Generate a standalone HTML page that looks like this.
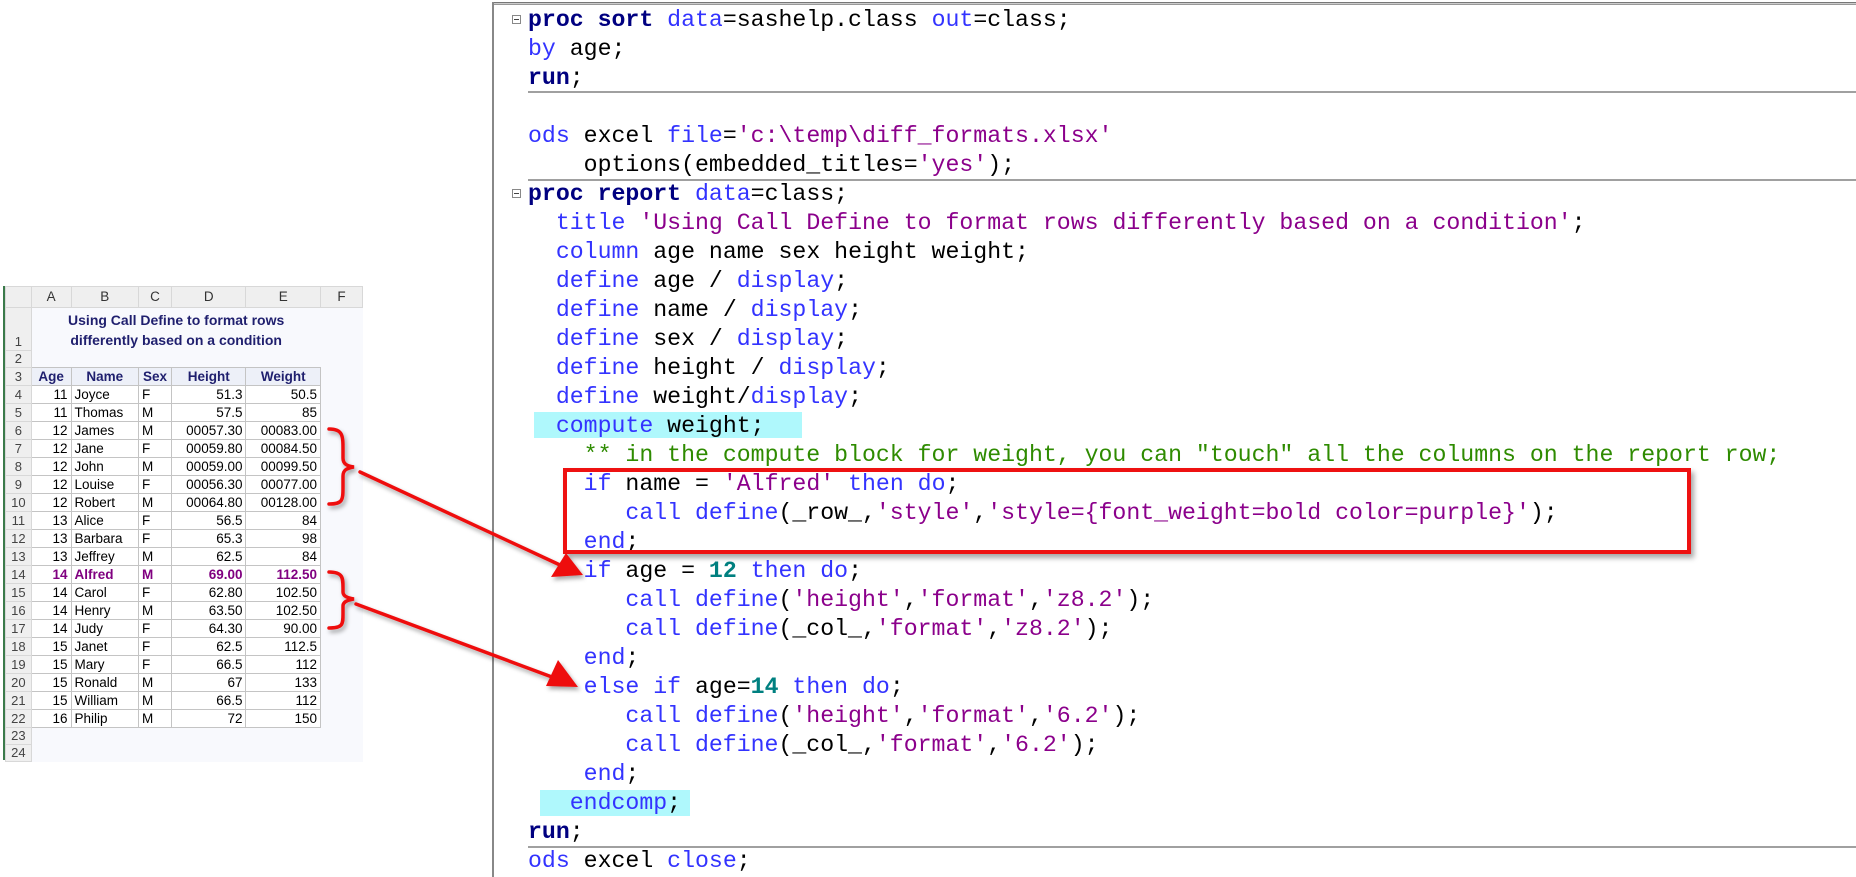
<!DOCTYPE html>
<html><head><meta charset="utf-8"><style>
*{margin:0;padding:0;box-sizing:border-box}
body{width:1856px;height:877px;background:#fff;position:relative;overflow:hidden;font-family:"Liberation Sans",Arial,sans-serif}
#sheet{position:absolute;left:3px;top:286px;width:360px;height:474px;background:#f8f9fd;border-left:2px solid #3a7a4a}
table{border-collapse:collapse;table-layout:fixed;font-size:13.5px;color:#000}
td{border:1px solid #c4c4c4;padding:0 3px;white-space:nowrap;overflow:hidden;line-height:16px}
td.rn{background:#efefef;color:#444;text-align:center;border-color:#d8d8d8;font-size:13px}
tr.hd td{background:#efefef;color:#333;text-align:center;border-color:#d8d8d8;height:21px}
td.r{text-align:right}
td.e{border:none;background:#f8f9fd}
tr.h3 td.c{font-weight:bold;color:#1f1f6e;text-align:center;background:#edf0f8}
tr.p td.c{color:#800080;font-weight:bold}
td.c{background:#fff}
.code{position:absolute;left:528px;font-family:"Liberation Mono","Courier New",monospace;font-size:23.2px;white-space:pre;line-height:29px;color:#000}
.k{color:#3333ff}.b{color:#000080;font-weight:bold}.s{color:#8b008b}.n{color:#008080;font-weight:bold}.g{color:#2e8b00}
.sep{position:absolute;left:528px;right:0;height:2px;background:#a0a0a0}
.fold{position:absolute;width:9px;height:9px;border:1px solid #888;left:512px;font-size:0}
.fold:after{content:"";position:absolute;left:1px;top:3px;width:5px;height:1px;background:#444}
</style></head><body>

<div style="position:absolute;left:492px;top:2px;right:0;height:3px;border-top:1px solid #777;border-bottom:1px solid #999;background:#ccc"></div>
<div style="position:absolute;left:492px;top:2px;width:2px;height:875px;background:#888"></div>
<div class="sep" style="top:91px"></div>
<div class="sep" style="top:179px"></div>
<div class="sep" style="top:846px"></div>
<div class="fold" style="top:15px"></div>
<div class="fold" style="top:189px"></div>

<div style="position:absolute;left:534px;top:412px;width:268px;height:26px;background:#aff8fc"></div>
<div style="position:absolute;left:540px;top:790px;width:150px;height:26px;background:#aff8fc"></div>

<div class="code" style="top:6px"><span class="b">proc sort</span> <span class="k">data</span>=sashelp.class <span class="k">out</span>=class;
<span class="k">by</span> age;
<span class="b">run</span>;

<span class="k">ods</span> excel <span class="k">file</span>=<span class="s">'c:\temp\diff_formats.xlsx'</span>
    options(embedded_titles=<span class="s">'yes'</span>);
<span class="b">proc report</span> <span class="k">data</span>=class;
  <span class="k">title</span> <span class="s">'Using Call Define to format rows differently based on a condition'</span>;
  <span class="k">column</span> age name sex height weight;
  <span class="k">define</span> age / <span class="k">display</span>;
  <span class="k">define</span> name / <span class="k">display</span>;
  <span class="k">define</span> sex / <span class="k">display</span>;
  <span class="k">define</span> height / <span class="k">display</span>;
  <span class="k">define</span> weight/<span class="k">display</span>;
  <span class="k">compute</span> weight;
    <span class="g">** in the compute block for weight, you can "touch" all the columns on the report row;</span>
    <span class="k">if</span> name = <span class="s">'Alfred'</span> <span class="k">then do</span>;
       <span class="k">call define</span>(_row_,<span class="s">'style'</span>,<span class="s">'style={font_weight=bold color=purple}'</span>);
    <span class="k">end</span>;
    <span class="k">if</span> age = <span class="n">12</span> <span class="k">then do</span>;
       <span class="k">call define</span>(<span class="s">'height'</span>,<span class="s">'format'</span>,<span class="s">'z8.2'</span>);
       <span class="k">call define</span>(_col_,<span class="s">'format'</span>,<span class="s">'z8.2'</span>);
    <span class="k">end</span>;
    <span class="k">else if</span> age=<span class="n">14</span> <span class="k">then do</span>;
       <span class="k">call define</span>(<span class="s">'height'</span>,<span class="s">'format'</span>,<span class="s">'6.2'</span>);
       <span class="k">call define</span>(_col_,<span class="s">'format'</span>,<span class="s">'6.2'</span>);
    <span class="k">end</span>;
   <span class="k">endcomp</span>;
<span class="b">run</span>;
<span class="k">ods</span> excel <span class="k">close</span>;</div>

<div style="position:absolute;left:563px;top:468px;width:1128px;height:86px;border:4px solid #ee1111;box-shadow:3px 4px 5px rgba(0,0,0,.35)"></div>

<div id="sheet">
<table>
<colgroup><col style="width:26px"><col style="width:40px"><col style="width:68px"><col style="width:33px"><col style="width:75px"><col style="width:75px"><col style="width:43px"></colgroup>
<tr class="hd"><td></td><td>A</td><td>B</td><td>C</td><td>D</td><td>E</td><td>F</td></tr>
<tr style="height:43px"><td class="rn" style="vertical-align:bottom">1</td><td class="e" colspan="5" style="text-align:center;font-weight:bold;color:#1f1f6e;font-size:14px;line-height:20px;vertical-align:top;padding-top:2px">Using Call Define to format rows<br>differently based on a condition</td><td class="e"></td></tr>
<tr style="height:16px"><td class="rn">2</td><td class="e" colspan="6"></td></tr>
<tr class="h3" style="height:18px"><td class="rn">3</td><td class="c">Age</td><td class="c">Name</td><td class="c">Sex</td><td class="c">Height</td><td class="c">Weight</td><td class="e"></td></tr>
<tr style="height:18px"><td class="rn">4</td><td class="c r">11</td><td class="c">Joyce</td><td class="c">F</td><td class="c r">51.3</td><td class="c r">50.5</td><td class="e"></td></tr>
<tr style="height:18px"><td class="rn">5</td><td class="c r">11</td><td class="c">Thomas</td><td class="c">M</td><td class="c r">57.5</td><td class="c r">85</td><td class="e"></td></tr>
<tr style="height:18px"><td class="rn">6</td><td class="c r">12</td><td class="c">James</td><td class="c">M</td><td class="c r">00057.30</td><td class="c r">00083.00</td><td class="e"></td></tr>
<tr style="height:18px"><td class="rn">7</td><td class="c r">12</td><td class="c">Jane</td><td class="c">F</td><td class="c r">00059.80</td><td class="c r">00084.50</td><td class="e"></td></tr>
<tr style="height:18px"><td class="rn">8</td><td class="c r">12</td><td class="c">John</td><td class="c">M</td><td class="c r">00059.00</td><td class="c r">00099.50</td><td class="e"></td></tr>
<tr style="height:18px"><td class="rn">9</td><td class="c r">12</td><td class="c">Louise</td><td class="c">F</td><td class="c r">00056.30</td><td class="c r">00077.00</td><td class="e"></td></tr>
<tr style="height:18px"><td class="rn">10</td><td class="c r">12</td><td class="c">Robert</td><td class="c">M</td><td class="c r">00064.80</td><td class="c r">00128.00</td><td class="e"></td></tr>
<tr style="height:18px"><td class="rn">11</td><td class="c r">13</td><td class="c">Alice</td><td class="c">F</td><td class="c r">56.5</td><td class="c r">84</td><td class="e"></td></tr>
<tr style="height:18px"><td class="rn">12</td><td class="c r">13</td><td class="c">Barbara</td><td class="c">F</td><td class="c r">65.3</td><td class="c r">98</td><td class="e"></td></tr>
<tr style="height:18px"><td class="rn">13</td><td class="c r">13</td><td class="c">Jeffrey</td><td class="c">M</td><td class="c r">62.5</td><td class="c r">84</td><td class="e"></td></tr>
<tr class="p" style="height:18px"><td class="rn">14</td><td class="c r">14</td><td class="c">Alfred</td><td class="c">M</td><td class="c r">69.00</td><td class="c r">112.50</td><td class="e"></td></tr>
<tr style="height:18px"><td class="rn">15</td><td class="c r">14</td><td class="c">Carol</td><td class="c">F</td><td class="c r">62.80</td><td class="c r">102.50</td><td class="e"></td></tr>
<tr style="height:18px"><td class="rn">16</td><td class="c r">14</td><td class="c">Henry</td><td class="c">M</td><td class="c r">63.50</td><td class="c r">102.50</td><td class="e"></td></tr>
<tr style="height:18px"><td class="rn">17</td><td class="c r">14</td><td class="c">Judy</td><td class="c">F</td><td class="c r">64.30</td><td class="c r">90.00</td><td class="e"></td></tr>
<tr style="height:18px"><td class="rn">18</td><td class="c r">15</td><td class="c">Janet</td><td class="c">F</td><td class="c r">62.5</td><td class="c r">112.5</td><td class="e"></td></tr>
<tr style="height:18px"><td class="rn">19</td><td class="c r">15</td><td class="c">Mary</td><td class="c">F</td><td class="c r">66.5</td><td class="c r">112</td><td class="e"></td></tr>
<tr style="height:18px"><td class="rn">20</td><td class="c r">15</td><td class="c">Ronald</td><td class="c">M</td><td class="c r">67</td><td class="c r">133</td><td class="e"></td></tr>
<tr style="height:18px"><td class="rn">21</td><td class="c r">15</td><td class="c">William</td><td class="c">M</td><td class="c r">66.5</td><td class="c r">112</td><td class="e"></td></tr>
<tr style="height:18px"><td class="rn">22</td><td class="c r">16</td><td class="c">Philip</td><td class="c">M</td><td class="c r">72</td><td class="c r">150</td><td class="e"></td></tr>
<tr style="height:17px"><td class="rn">23</td><td class="e" colspan="6"></td></tr>
<tr style="height:17px"><td class="rn">24</td><td class="e" colspan="6"></td></tr>
</table>
</div>

<svg width="1856" height="877" style="position:absolute;left:0;top:0" xmlns="http://www.w3.org/2000/svg">
<defs><filter id="sh"><feDropShadow dx="2" dy="3" stdDeviation="2" flood-opacity="0.35"/></filter></defs>
<g fill="none" stroke="#ee1111" stroke-width="3.5" stroke-linecap="round" filter="url(#sh)">
<path d="M329,429 C343,429 343,436 343,450 L343,458 C343,464 347,466 354,467 C347,468 343,470 343,476 L343,486 C343,500 343,504 329,504"/>
<path d="M329,572 C343,572 343,578 343,588 L343,592 C343,596 347,598 354,599 C347,600 343,602 343,606 L343,614 C343,624 343,628 329,628"/>
<path d="M360,472 L560,565"/>
<path d="M356,604 L560,680"/>
</g>
<g fill="#ee1111" filter="url(#sh)">
<path d="M583,575 L551,577 L566,553 Z"/>
<path d="M578,687 L546,686 L558,660 Z"/>
</g>
</svg>
</body></html>
